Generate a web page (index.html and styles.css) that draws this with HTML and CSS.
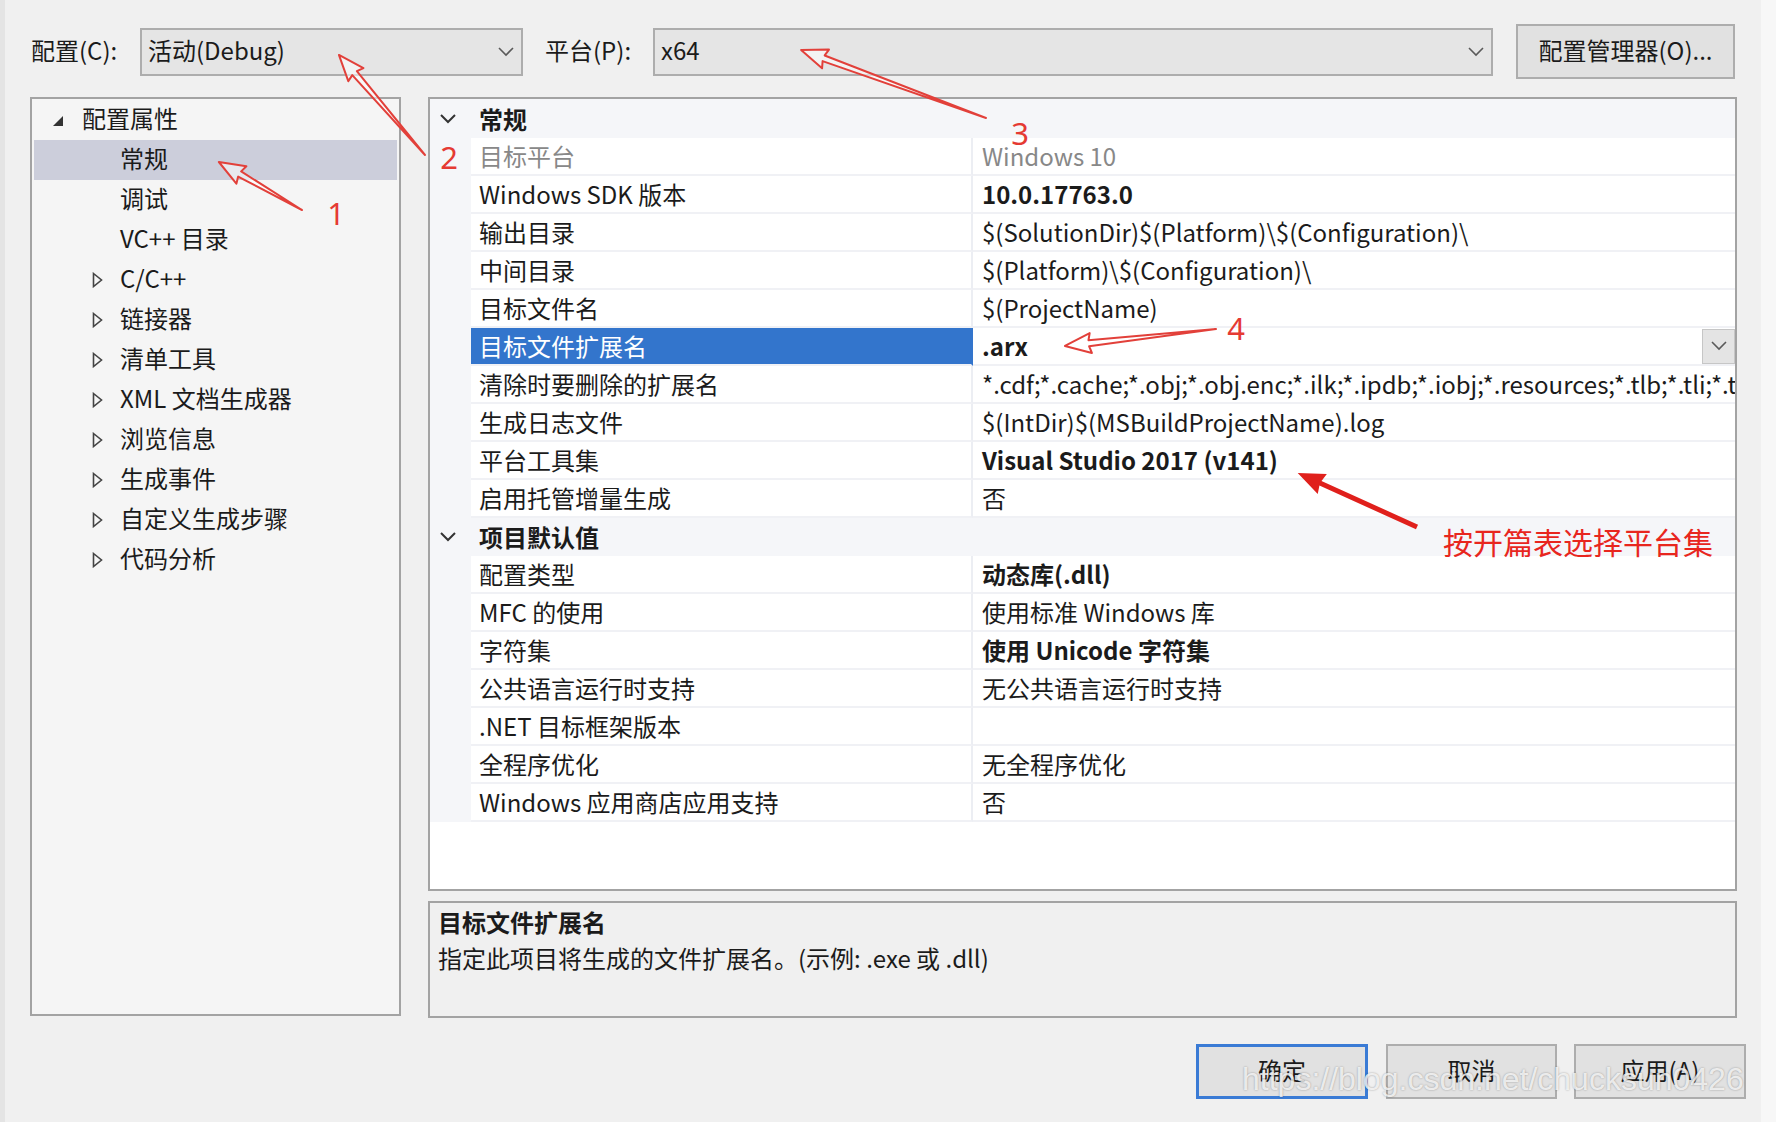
FILE: index.html
```html
<!DOCTYPE html>
<html lang="zh-CN">
<head>
<meta charset="UTF-8">
<title>属性页</title>
<link rel="stylesheet" href="styles.css">
</head>
<body>

<div class="window">
  <div class="toolbar">
    <span class="tb-label">配置(C):</span>
    <div class="combo combo-config">
      <span>活动(Debug)</span>
      <svg class="chev" width="16" height="10" viewBox="0 0 16 10"><path d="M1 1 L8 8 L15 1" /></svg>
    </div>
    <span class="tb-label tb-label-2">平台(P):</span>
    <div class="combo combo-platform">
      <span>x64</span>
      <svg class="chev" width="16" height="10" viewBox="0 0 16 10"><path d="M1 1 L8 8 L15 1" /></svg>
    </div>
    <button class="btn btn-manager">配置管理器(O)...</button>
  </div>

  <div class="main">
    <div class="tree">
      <div class="node root">
        <svg class="tw" width="10" height="10" viewBox="0 0 10 10"><path d="M10 0 L10 10 L0 10 Z" fill="#333" /></svg>
        <span>配置属性</span>
      </div>
      <div class="node leaf selected"><span>常规</span></div>
      <div class="node leaf"><span>调试</span></div>
      <div class="node leaf"><span>VC++ 目录</span></div>
      <div class="node sub"><svg class="tw" width="11" height="16" viewBox="0 0 11 16"><path class="closed" d="M1.5 1.5 L9.5 8 L1.5 14.5 Z" /></svg><span>C/C++</span></div>
      <div class="node sub"><svg class="tw" width="11" height="16" viewBox="0 0 11 16"><path class="closed" d="M1.5 1.5 L9.5 8 L1.5 14.5 Z" /></svg><span>链接器</span></div>
      <div class="node sub"><svg class="tw" width="11" height="16" viewBox="0 0 11 16"><path class="closed" d="M1.5 1.5 L9.5 8 L1.5 14.5 Z" /></svg><span>清单工具</span></div>
      <div class="node sub"><svg class="tw" width="11" height="16" viewBox="0 0 11 16"><path class="closed" d="M1.5 1.5 L9.5 8 L1.5 14.5 Z" /></svg><span>XML 文档生成器</span></div>
      <div class="node sub"><svg class="tw" width="11" height="16" viewBox="0 0 11 16"><path class="closed" d="M1.5 1.5 L9.5 8 L1.5 14.5 Z" /></svg><span>浏览信息</span></div>
      <div class="node sub"><svg class="tw" width="11" height="16" viewBox="0 0 11 16"><path class="closed" d="M1.5 1.5 L9.5 8 L1.5 14.5 Z" /></svg><span>生成事件</span></div>
      <div class="node sub"><svg class="tw" width="11" height="16" viewBox="0 0 11 16"><path class="closed" d="M1.5 1.5 L9.5 8 L1.5 14.5 Z" /></svg><span>自定义生成步骤</span></div>
      <div class="node sub"><svg class="tw" width="11" height="16" viewBox="0 0 11 16"><path class="closed" d="M1.5 1.5 L9.5 8 L1.5 14.5 Z" /></svg><span>代码分析</span></div>
    </div>

    <div class="right">
      <div class="grid">
        <div class="cat first">
          <svg class="cat-chev" width="16" height="10" viewBox="0 0 16 10"><path d="M1 1 L8 8 L15 1" /></svg>
          <span>常规</span>
        </div>
        <div class="prop disabled"><div class="name">目标平台</div><div class="value">Windows 10</div></div>
        <div class="prop"><div class="name">Windows SDK 版本</div><div class="value bold">10.0.17763.0</div></div>
        <div class="prop"><div class="name">输出目录</div><div class="value">$(SolutionDir)$(Platform)\$(Configuration)\</div></div>
        <div class="prop"><div class="name">中间目录</div><div class="value">$(Platform)\$(Configuration)\</div></div>
        <div class="prop"><div class="name">目标文件名</div><div class="value">$(ProjectName)</div></div>
        <div class="prop selected">
          <div class="name">目标文件扩展名</div>
          <div class="value bold">
            <span>.arx</span>
            <div class="drop"><svg width="16" height="10" viewBox="0 0 16 10"><path d="M1 1 L8 8 L15 1" /></svg></div>
          </div>
        </div>
        <div class="prop"><div class="name">清除时要删除的扩展名</div><div class="value">*.cdf;*.cache;*.obj;*.obj.enc;*.ilk;*.ipdb;*.iobj;*.resources;*.tlb;*.tli;*.tlh;*.tmp;*.rsp;*.pgc;*.pgd;*.meta;*.tlog;*.manifest;*.res;*.pch;*.exp;*.idb</div></div>
        <div class="prop"><div class="name">生成日志文件</div><div class="value">$(IntDir)$(MSBuildProjectName).log</div></div>
        <div class="prop"><div class="name">平台工具集</div><div class="value bold">Visual Studio 2017 (v141)</div></div>
        <div class="prop"><div class="name">启用托管增量生成</div><div class="value">否</div></div>

        <div class="cat">
          <svg class="cat-chev" width="16" height="10" viewBox="0 0 16 10"><path d="M1 1 L8 8 L15 1" /></svg>
          <span>项目默认值</span>
        </div>
        <div class="prop"><div class="name">配置类型</div><div class="value bold">动态库(.dll)</div></div>
        <div class="prop"><div class="name">MFC 的使用</div><div class="value">使用标准 Windows 库</div></div>
        <div class="prop"><div class="name">字符集</div><div class="value bold">使用 Unicode 字符集</div></div>
        <div class="prop"><div class="name">公共语言运行时支持</div><div class="value">无公共语言运行时支持</div></div>
        <div class="prop"><div class="name">.NET 目标框架版本</div><div class="value"></div></div>
        <div class="prop"><div class="name">全程序优化</div><div class="value">无全程序优化</div></div>
        <div class="prop"><div class="name">Windows 应用商店应用支持</div><div class="value">否</div></div>
      </div>

      <div class="desc">
        <div class="desc-title">目标文件扩展名</div>
        <div class="desc-text">指定此项目将生成的文件扩展名。(示例: .exe 或 .dll)</div>
      </div>
    </div>
  </div>

  <div class="buttons">
    <button class="btn btn-ok">确定</button>
    <button class="btn btn-cancel">取消</button>
    <button class="btn btn-apply">应用(A)</button>
  </div>
</div>

<!-- red marks drawn on top of the screenshot -->
<svg class="marks" width="1776" height="1122" viewBox="0 0 1776 1122">
  <g class="hollow">
    <g transform="translate(302,210) rotate(-150)"><path d="M0,0 L72,-3 L70,-10 L96,0 L70,10 L72,3 Z" /></g>
    <g transform="translate(425,155) rotate(-130.7)"><path d="M0,0 L108,-3 L106,-10 L132,0 L106,10 L108,3 Z" /></g>
    <g transform="translate(986,118) rotate(-159.8)"><path d="M0,0 L173,-3 L171,-10 L197,0 L171,10 L173,3 Z" /></g>
    <g transform="translate(1216,329) rotate(173.6)"><path d="M0,0 L128,-3 L126,-10 L152,0 L126,10 L128,3 Z" /></g>
  </g>
  <g class="solid">
    <g transform="translate(1417,527) rotate(-155.6)"><path d="M0,-2.5 L106,-2.5 L104,-11 L131,0 L104,11 L106,2.5 L0,2.5 Z" /></g>
  </g>
  <text class="num" x="336" y="225">1</text>
  <text class="num" x="449" y="169">2</text>
  <text class="num" x="1020" y="145">3</text>
  <text class="num" x="1236" y="340">4</text>
  <text class="note" x="1443" y="554">按开篇表选择平台集</text>
</svg>

<div class="watermark">https://blog.csdn.net/chucksun0426</div>

</body>
</html>
```

FILE: styles.css
```css
* { box-sizing: border-box; }
html, body { margin: 0; }
body {
  width: 1776px;
  height: 1122px;
  overflow: hidden;
  position: relative;
  background: #f0f0f0;
  font-family: "Noto Sans CJK SC", "Noto Sans", sans-serif;
  font-size: 24px;
  color: #1b1b1b;
}
button { font: inherit; color: inherit; }

.window {
  height: 1122px;
  border-left: 5px solid #e4e4e4;
  border-right: 15px solid #f7f7f7;
  padding: 24px 0 0 26px;
}

/* top bar */
.toolbar {
  display: flex;
  align-items: center;
  height: 55px;
}
.tb-label { width: 109px; line-height: 30px; margin-bottom: 4px; }
.tb-label-2 { width: 108px; margin-left: 22px; }
.combo {
  height: 48px;
  display: flex;
  align-items: center;
  justify-content: space-between;
  padding: 0 7px 0 6px;
  background: #e5e5e5;
  border: 2px solid #adadad;
  line-height: 30px;
}
.combo span { margin-bottom: 4px; }
.combo-config { width: 383px; }
.combo-platform { width: 840px; }
.chev path, .drop path {
  fill: none;
  stroke: #5a5a5a;
  stroke-width: 1.6;
}
.btn {
  height: 55px;
  background: #e1e1e1;
  border: 2px solid #adadad;
  padding: 0 0 4px;
  line-height: 30px;
}
.btn-manager { width: 219px; margin-left: 23px; }

/* main area */
.main {
  display: flex;
  align-items: flex-start;
  margin-top: 18px;
  margin-left: -1px;
}
.tree {
  width: 371px;
  height: 919px;
  border: 2px solid #a3a3a3;
  background: #f5f5f5;
  padding-top: 1px;
}
.node {
  height: 40px;
  display: flex;
  align-items: center;
  margin: 0 2px;
  line-height: 30px;
}
.node span { margin-bottom: 4px; }
.node.root { padding-left: 19px; }
.node.root .tw { margin-right: 19px; margin-top: 2px; }
.node.sub { padding-left: 58px; }
.node.sub .tw { margin-right: 17px; }
.node.leaf { padding-left: 86px; }
.node.selected { background: #cccedb; }
.tw .closed {
  fill: none;
  stroke: #444;
  stroke-width: 1.6;
}

.right {
  width: 1309px;
  margin-left: 27px;
}
.grid {
  height: 794px;
  border: 2px solid #a3a3a3;
  background: #fff;
  overflow: hidden;
}
.cat {
  height: 38px;
  display: flex;
  align-items: center;
  padding-left: 10px;
  background: #f5f6f9;
  font-weight: bold;
  line-height: 30px;
}
.cat.first { height: 39px; }
.cat-chev { margin-right: 23px; }
.cat-chev path {
  fill: none;
  stroke: #333;
  stroke-width: 2;
}
.prop {
  height: 38px;
  display: flex;
  padding-left: 41px;
  background: #f5f6f9;
  line-height: 30px;
}
.prop .name {
  width: 502px;
  display: flex;
  align-items: center;
  padding-left: 8px;
  background: #fff;
  border-right: 2px solid #eceef3;
  border-bottom: 2px solid #f0f1f5;
  white-space: nowrap;
}
.prop .value {
  flex: 1;
  min-width: 0;
  display: flex;
  align-items: center;
  padding-left: 9px;
  background: #fff;
  border-bottom: 2px solid #f0f1f5;
  white-space: nowrap;
  overflow: hidden;
}
.prop.disabled .name, .prop.disabled .value { color: #888; }
.bold { font-weight: bold; }
.prop.selected .name {
  background: #3375cc;
  color: #fff;
  border-right-color: #3375cc;
}
.prop.selected .value { justify-content: space-between; }
.drop {
  width: 33px;
  height: 35px;
  display: flex;
  align-items: center;
  justify-content: center;
  background: #e4e4e4;
  border: 1px solid #c6c6c6;
}

.desc {
  height: 117px;
  margin-top: 10px;
  border: 2px solid #a3a3a3;
  padding: 1px 8px;
  line-height: 36px;
}
.desc-title { font-weight: bold; }

/* dialog buttons */
.buttons {
  display: flex;
  justify-content: flex-end;
  margin-top: 26px;
  padding-right: 15px;
}
.btn-ok { width: 172px; border: 3px solid #3a7bd5; }
.btn-cancel { width: 171px; margin-left: 18px; }
.btn-apply { width: 172px; margin-left: 17px; }

/* annotations */
.marks {
  position: absolute;
  left: 0;
  top: 0;
  pointer-events: none;
}
.hollow path {
  fill: rgba(255, 255, 255, 0.55);
  stroke: #e2403a;
  stroke-width: 2;
  stroke-linejoin: round;
}
.solid path { fill: #e0201c; }
.num {
  font-family: "Noto Sans", sans-serif;
  font-size: 31px;
  fill: #e53a33;
  text-anchor: middle;
}
.note {
  font-family: "Noto Sans CJK SC", sans-serif;
  font-size: 30px;
  fill: #e8261e;
}
.watermark {
  position: absolute;
  left: 1242px;
  top: 1063px;
  font-family: "Liberation Sans", Arial, sans-serif;
  font-size: 32px;
  line-height: 32px;
  color: rgba(255, 255, 255, 0.8);
  text-shadow: 0 0 2px rgba(0, 0, 0, 0.35);
  white-space: nowrap;
}
```
